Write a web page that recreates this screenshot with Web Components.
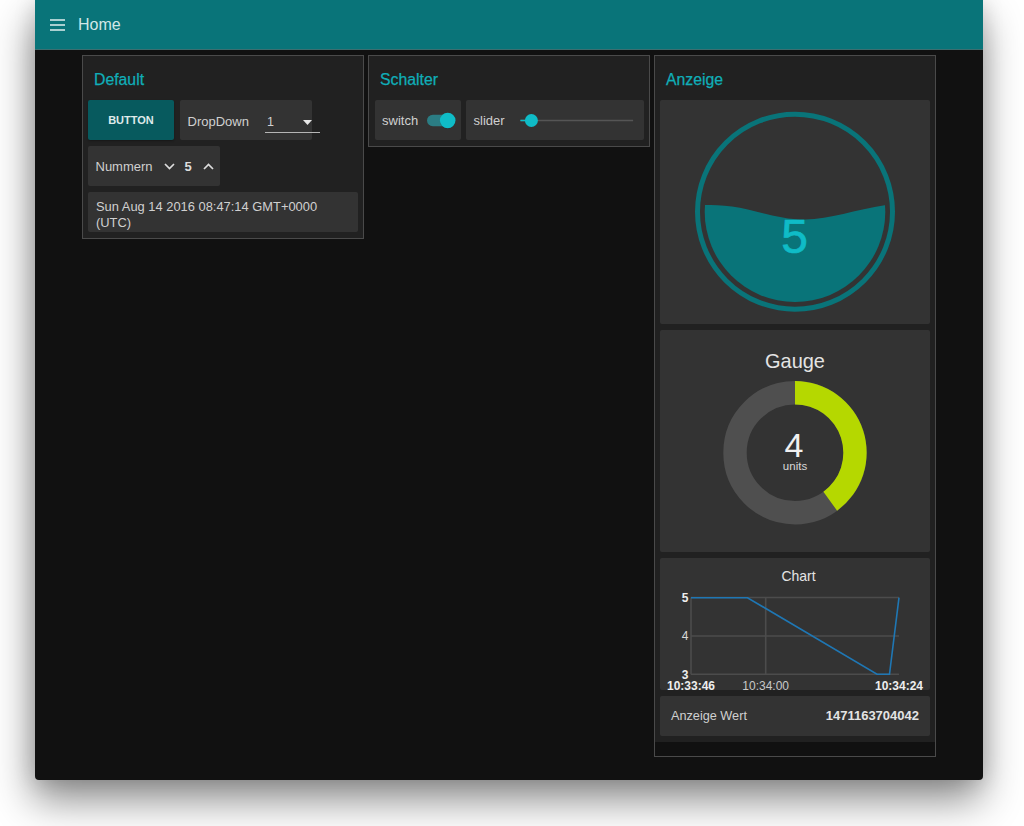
<!DOCTYPE html>
<html lang="en"><head><meta charset="utf-8"><title>Home</title>
<style>
html,body{margin:0;padding:0;height:826px;overflow:hidden;background:#fff;font-family:"Liberation Sans",Arial,sans-serif;}
</style></head><body>
<ui-window>
  <ui-toolbar slot="top">Home</ui-toolbar>
  <ui-group title="Default">
    <ui-button w="86">BUTTON</ui-button>
    <ui-dropdown w="132" label="DropDown" value="1"></ui-dropdown>
    <ui-numeric w="132" label="Nummern" value="5"></ui-numeric>
    <ui-card w="270" pad="date">Sun Aug 14 2016 08:47:14 GMT+0000 (UTC)</ui-card>
  </ui-group>
  <ui-group title="Schalter" style="--inset-l:5.6px;--inset-r:5px;--gap-x:5px">
    <ui-switch w="86" label="switch"></ui-switch>
    <ui-slider w="178" label="slider"></ui-slider>
  </ui-group>
  <ui-group title="Anzeige" style="--tail:14px">
    <ui-liquid></ui-liquid>
    <ui-gauge></ui-gauge>
    <ui-chart></ui-chart>
    <ui-textrow label="Anzeige Wert" value="1471163704042"></ui-textrow>
  </ui-group>
</ui-window>
<script>
function def(name, render){
  customElements.define(name, class extends HTMLElement{
    connectedCallback(){
      if(this.shadowRoot) return;
      this.attachShadow({mode:'open'}).innerHTML = render(this);
    }
  });
}
const cardCss = (el)=>`:host{display:flex;align-items:center;box-sizing:border-box;width:${el.getAttribute('w')||270}px;height:40px;background:#333;border-radius:2px;color:#d0d0d0;font-size:13px;position:relative}`;

def('ui-window',()=>`<style>
:host{display:block;width:948px;height:780px;margin-left:35px;background:#111;border-radius:0 0 4px 4px;box-shadow:-2px 20px 40px rgba(0,0,0,.46),0 0 22px rgba(0,0,0,.14);overflow:hidden}
main{display:flex;gap:4px;justify-content:center;align-items:flex-start;padding-top:5px}
</style><slot name="top"></slot><main><slot></slot></main>`);

def('ui-toolbar',()=>`<style>
:host{display:flex;align-items:center;gap:13px;height:50px;box-sizing:border-box;padding-left:15px;background:#097479;color:#d2e7e7;font-size:16px;border-bottom:1px solid #3c6e70}
svg{display:block}
</style><svg width="15" height="12" viewBox="0 0 15 12"><path d="M0 1h15M0 6h15M0 11h15" stroke="#e0eeee" stroke-width="1.7" fill="none"/></svg><span><slot></slot></span>`);

def('ui-group',(el)=>`<style>
:host{display:block;box-sizing:border-box;width:282px;border:1px solid #4a4a4a;padding-bottom:var(--tail,0)}
.in{background:#212121;padding-bottom:6px}
h2{margin:0;height:44px;box-sizing:border-box;padding:15px 0 0 11px;font-size:15.8px;line-height:18px;font-weight:400;color:#10aeb8;-webkit-text-stroke:.25px #10aeb8}
.w{display:flex;flex-wrap:wrap;gap:6px var(--gap-x,6px);padding:0 var(--inset-r,5px) 0 var(--inset-l,5px)}
</style><div class="in"><h2>${el.getAttribute('title')}</h2><div class="w"><slot></slot></div></div>`);

def('ui-button',(el)=>`<style>${cardCss(el)}
:host{justify-content:center;background:#075a5e;color:#dfeaea;font-size:11px;font-weight:700;box-shadow:0 1px 2px rgba(0,0,0,.3)}
</style><slot></slot>`);

def('ui-card',(el)=>`<style>${cardCss(el)}
:host{padding:7px 8px 0;line-height:16px;font-size:12.9px;align-items:flex-start;overflow:hidden}
</style><div><slot></slot></div>`);

def('ui-dropdown',(el)=>`<style>${cardCss(el)}
:host{padding:3px 0 0 7.5px}
.l{font-size:13px}
.s{position:absolute;left:85px;top:11px;width:55px;height:22px;border-bottom:1px solid #b5b5b5;box-sizing:border-box;padding:1px 0 0 2px;line-height:20px;font-size:12.5px}
svg{position:absolute;right:8px;top:9px}
</style><span class="l">${el.getAttribute('label')}</span><div class="s">${el.getAttribute('value')}<svg width="9" height="5" viewBox="0 0 9 5"><path d="M0 0h9L4.5 5z" fill="#e8e8e8"/></svg></div>`);

def('ui-numeric',(el)=>`<style>${cardCss(el)}
:host{padding-left:7.5px}
span.l{width:68px}
b{width:16px;text-align:center;font-size:13px;color:#ddd;margin:0 0 0 5.5px}
svg{display:block;flex:none}
.u{margin-left:7px}
</style><span class="l">${el.getAttribute('label')}</span><svg class="d" width="11" height="7" viewBox="0 0 11 7"><path d="M1 1l4.5 4.5L10 1" fill="none" stroke="#ddd" stroke-width="1.7"/></svg><b>${el.getAttribute('value')}</b><svg class="u" width="11" height="7" viewBox="0 0 11 7"><path d="M1 6l4.5-4.5L10 6" fill="none" stroke="#ddd" stroke-width="1.7"/></svg>`);

def('ui-switch',(el)=>`<style>${cardCss(el)}
:host{padding-left:7.5px}
svg{position:absolute;left:48px;top:8px}
</style><span>${el.getAttribute('label')}</span><svg width="34" height="24" viewBox="0 0 34 24"><rect x="4" y="6.7" width="25" height="11.6" rx="5.8" fill="#2b7d84"/><circle cx="24.7" cy="13" r="7.8" fill="#000" opacity=".18"/><circle cx="24.7" cy="12.5" r="7.8" fill="#0fbcc7"/></svg>`);

def('ui-slider',(el)=>`<style>${cardCss(el)}
:host{padding-left:8px}
svg{position:absolute;left:50px;top:10px}
</style><span>${el.getAttribute('label')}</span><svg width="122" height="20" viewBox="0 0 122 20"><path d="M4.4 10.5h112.7" stroke="#555" stroke-width="1.5"/><path d="M4.4 10.5h11" stroke="#0fbcc7" stroke-width="1.5"/><circle cx="15.4" cy="10.5" r="6.5" fill="#0fbcc7"/></svg>`);

const svgCard = (h,inner)=>`<style>:host{display:block;width:270px;height:${h}px;background:#333;border-radius:2px}svg{display:block;overflow:visible}text{font-family:"Liberation Sans",Arial,sans-serif}</style><svg width="270" height="${h}" viewBox="0 0 270 ${h}">${inner}</svg>`;

def('ui-liquid',()=>svgCard(224,`
<defs><clipPath id="c"><circle cx="135" cy="111.7" r="90.3"/></clipPath></defs>
<circle cx="135" cy="111.7" r="97.5" fill="none" stroke="#097479" stroke-width="5"/>
<path clip-path="url(#c)" d="M40 105C50 105 60 105.1 72 106.5C95 109.5 118 119.5 145 119.5C170 119.5 195 109.5 226 105V210H40Z" fill="#097479"/>
<text x="134.5" y="153" font-size="48" text-anchor="middle" fill="#0fbcc7" stroke="#0fbcc7" stroke-width=".7">5</text>`));

def('ui-gauge',()=>svgCard(222.3,`
<circle cx="135" cy="122.7" r="60" fill="none" stroke="#4f4f4f" stroke-width="23.4"/>
<path d="M135 51A71.7 71.7 0 0 1 177.1 180.7L163.4 161.8A48.3 48.3 0 0 0 135 74.4Z" fill="#b5d800"/>
<text x="135" y="38" font-size="20" text-anchor="middle" fill="#e4e4e4">Gauge</text>
<text x="134" y="127" font-size="34" text-anchor="middle" fill="#f0f0f0">4</text>
<text x="135" y="140.5" font-size="11.5" text-anchor="middle" fill="#d8d8d8">units</text>`));

def('ui-chart',()=>svgCard(131.7,`
<text x="138.5" y="23" font-size="14" text-anchor="middle" fill="#e4e4e4">Chart</text>
<g stroke="#4c4c4c" stroke-width="1.6" fill="none">
<path d="M31 39.5H239M31 78H239M31 116.3H239M31 39.5V116.3M105.7 39.5V116.3"/></g>
<path d="M31 39.7H87.5L217 116.3H229.5L239 39.7" fill="none" stroke="#1f77b4" stroke-width="1.6"/>
<g font-size="12" fill="#d8d8d8" text-anchor="end">
<text x="28.5" y="44" font-weight="700" fill="#eee">5</text>
<text x="28.5" y="82.5">4</text>
<text x="28.5" y="121" font-weight="700" fill="#eee">3</text></g>
<g font-size="12" text-anchor="middle">
<text x="31" y="132" font-weight="700" fill="#eee">10:33:46</text>
<text x="105.7" y="132" fill="#c8c8c8">10:34:00</text>
<text x="239" y="132" font-weight="700" fill="#eee">10:34:24</text></g>`));

def('ui-textrow',(el)=>`<style>${cardCss(el)}
:host{justify-content:space-between;padding:0 11px}
b{color:#e4e4e4;font-size:13px}
span{font-size:12.7px}
</style><span>${el.getAttribute('label')}</span><b>${el.getAttribute('value')}</b>`);
</script>
</body></html>
